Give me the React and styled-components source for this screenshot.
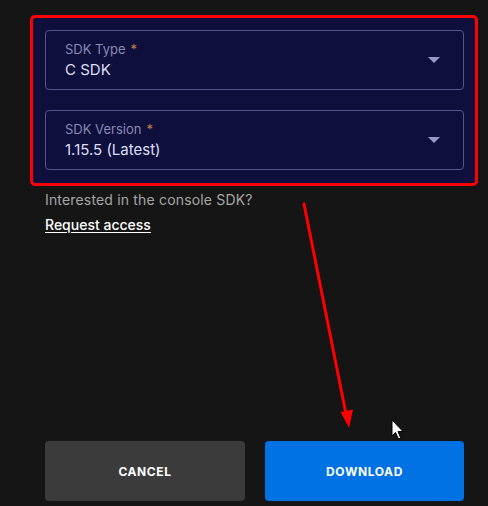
import React from 'react';
import styled, { createGlobalStyle } from 'styled-components';

const Global = createGlobalStyle`
  html, body {
    margin: 0;
    padding: 0;
    background: #151515;
    font-family: Inter, "Noto Sans", sans-serif;
  }
`;

const Page = styled.div`
  position: relative;
  width: 488px;
  height: 506px;
  box-sizing: border-box;
  padding: 15px 10px 5px 30px;
  display: flex;
  flex-direction: column;
  overflow: hidden;
`;

const Highlight = styled.div`
  width: 448px;
  box-sizing: border-box;
  border: 3px solid #ff0000;
  border-radius: 5px;
  background: #0f0f3d;
  padding: 12px 11px 13px 12px;
  display: flex;
  flex-direction: column;
  gap: 20px;
`;

const Field = styled.div`
  height: 60px;
  box-sizing: border-box;
  border: 1px solid #55558a;
  border-radius: 4px;
  padding: 0 23px 0 19px;
  display: flex;
  align-items: center;
  justify-content: space-between;
`;

const FieldText = styled.div`
  display: flex;
  flex-direction: column;
  gap: 3px;
`;

const Label = styled.div`
  font-size: 13px;
  line-height: 16px;
  color: #8a8ab4;
  span {
    color: #c97a58;
    margin-left: 5px;
  }
`;

const Value = styled.div`
  font-size: 15px;
  line-height: 20px;
  color: #dedef6;
`;

const Caret = styled.div`
  width: 0;
  height: 0;
  border-left: 6px solid transparent;
  border-right: 6px solid transparent;
  border-top: 6px solid #9a9ac6;
`;

const Body = styled.div`
  padding-left: 15px;
  display: flex;
  flex-direction: column;
  flex: 1;
`;

const Hint = styled.div`
  margin-top: 4px;
  font-size: 14px;
  line-height: 20px;
  letter-spacing: 0.17px;
  color: #a6a6a6;
`;

const Link = styled.a`
  margin-top: 5px;
  font-size: 14px;
  line-height: 20px;
  color: #ffffff;
  font-weight: 500;
  text-decoration: underline;
  text-underline-offset: 2px;
  align-self: flex-start;
`;

const Buttons = styled.div`
  margin-top: auto;
  width: 419px;
  display: grid;
  grid-template-columns: 200px 199px;
  gap: 20px;
`;

const Button = styled.button`
  height: 60px;
  border: none;
  border-radius: 4px;
  background: ${p => (p.$primary ? '#0072e3' : '#3b3b3b')};
  color: #ffffff;
  font-family: Inter, "Noto Sans", sans-serif;
  font-size: 12px;
  font-weight: 700;
  letter-spacing: 0.6px;
`;

const Overlay = styled.svg`
  position: absolute;
  left: 0;
  top: 0;
  pointer-events: none;
`;

function SelectField({ label, value }) {
  return (
    <Field>
      <FieldText>
        <Label>
          {label}
          <span>*</span>
        </Label>
        <Value>{value}</Value>
      </FieldText>
      <Caret />
    </Field>
  );
}

export default function App() {
  return (
    <>
      <Global />
      <Page>
        <Highlight>
          <SelectField label="SDK Type" value="C SDK" />
          <SelectField label="SDK Version" value="1.15.5 (Latest)" />
        </Highlight>
        <Body>
          <Hint>Interested in the console SDK?</Hint>
          <Link href="#">Request access</Link>
          <Buttons>
            <Button>CANCEL</Button>
            <Button $primary>DOWNLOAD</Button>
          </Buttons>
        </Body>
        <Overlay width="488" height="506" viewBox="0 0 488 506">
          <line x1="304" y1="204" x2="346" y2="414" stroke="#ff0000" strokeWidth="3" strokeLinecap="round" />
          <polygon points="340.5,412 353,409.5 349,428" fill="#ff0000" />
          <path
            d="M392 420 L392 436 L395.5 432.5 L398.5 439 L400.8 438 L398 431.5 L403 431.5 Z"
            fill="#ffffff"
            stroke="#000000"
            strokeWidth="1"
            strokeLinejoin="round"
          />
        </Overlay>
      </Page>
    </>
  );
}
